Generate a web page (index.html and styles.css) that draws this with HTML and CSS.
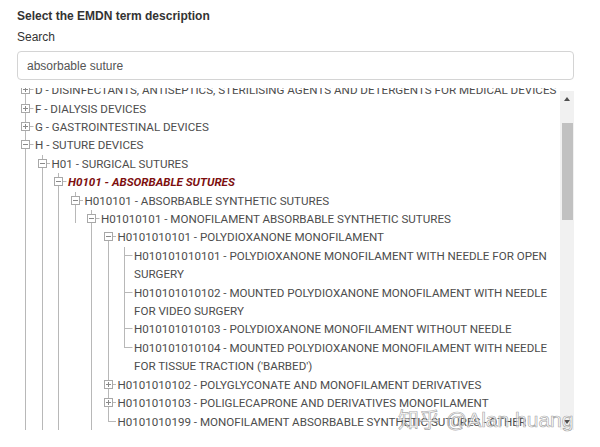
FILE: index.html
```html
<html lang="en">

<head>
    <title>EMDN term</title>
    <link rel="stylesheet" href="styles.css">
</head>

<body>
    <h4 class="title">Select the EMDN term description</h4>
    <label class="label" for="search">Search</label>
    <input id="search" class="search" type="text" value="absorbable suture">

    <div class="tree">
        <div class="tree-body">
            <div class="tree-list">
                <div class="row"><span class="g box plus up down"></span><span class="t">D - DISINFECTANTS, ANTISEPTICS, STERILISING AGENTS AND DETERGENTS FOR MEDICAL DEVICES</span></div>
                <div class="row"><span class="g box plus up down"></span><span class="t">F - DIALYSIS DEVICES</span></div>
                <div class="row"><span class="g box plus up down"></span><span class="t">G - GASTROINTESTINAL DEVICES</span></div>
                <div class="row"><span class="g box up down"></span><span class="t">H - SUTURE DEVICES</span></div>
                <div class="row"><span class="g v"></span><span class="g box up down"></span><span class="t">H01 - SURGICAL SUTURES</span></div>
                <div class="row"><span class="g v"></span><span class="g v"></span><span class="g box up down"></span><span class="t hl">H0101 - ABSORBABLE SUTURES</span></div>
                <div class="row"><span class="g v"></span><span class="g v"></span><span class="g v"></span><span class="g box up down"></span><span class="t">H010101 - ABSORBABLE SYNTHETIC SUTURES</span></div>
                <div class="row"><span class="g v"></span><span class="g v"></span><span class="g v"></span><span class="g vt"></span><span class="g box up down"></span><span class="t">H01010101 - MONOFILAMENT ABSORBABLE SYNTHETIC SUTURES</span></div>
                <div class="row"><span class="g v"></span><span class="g v"></span><span class="g v"></span><span class="g"></span><span class="g v"></span><span class="g box down"></span><span class="t">H0101010101 - POLYDIOXANONE MONOFILAMENT</span></div>
                <div class="row"><span class="g v"></span><span class="g v"></span><span class="g v"></span><span class="g"></span><span class="g v"></span><span class="g v"></span><span class="g leaf"></span><span class="t">H010101010101 - POLYDIOXANONE MONOFILAMENT WITH NEEDLE FOR OPEN SURGERY</span></div>
                <div class="row"><span class="g v"></span><span class="g v"></span><span class="g v"></span><span class="g"></span><span class="g v"></span><span class="g v"></span><span class="g leaf"></span><span class="t">H010101010102 - MOUNTED POLYDIOXANONE MONOFILAMENT WITH NEEDLE FOR VIDEO SURGERY</span></div>
                <div class="row"><span class="g v"></span><span class="g v"></span><span class="g v"></span><span class="g"></span><span class="g v"></span><span class="g v"></span><span class="g leaf"></span><span class="t">H010101010103 - POLYDIOXANONE MONOFILAMENT WITHOUT NEEDLE</span></div>
                <div class="row"><span class="g v"></span><span class="g v"></span><span class="g v"></span><span class="g"></span><span class="g v"></span><span class="g v"></span><span class="g leaf last"></span><span class="t">H010101010104 - MOUNTED POLYDIOXANONE MONOFILAMENT WITH NEEDLE FOR TISSUE TRACTION ('BARBED')</span></div>
                <div class="row"><span class="g v"></span><span class="g v"></span><span class="g v"></span><span class="g"></span><span class="g v"></span><span class="g box plus up down"></span><span class="t">H0101010102 - POLYGLYCONATE AND MONOFILAMENT DERIVATIVES</span></div>
                <div class="row"><span class="g v"></span><span class="g v"></span><span class="g v"></span><span class="g"></span><span class="g v"></span><span class="g box plus up down"></span><span class="t">H0101010103 - POLIGLECAPRONE AND DERIVATIVES MONOFILAMENT</span></div>
                <div class="row"><span class="g v"></span><span class="g v"></span><span class="g v"></span><span class="g"></span><span class="g v"></span><span class="g leaf last"></span><span class="t">H0101010199 - MONOFILAMENT ABSORBABLE SYNTHETIC SUTURES - OTHER</span></div>
                <div class="row"><span class="g v"></span><span class="g v"></span><span class="g v"></span><span class="g"></span><span class="g box plus up down"></span><span class="t">H01010102 - MULTIFILAMENT ABSORBABLE SYNTHETIC SUTURES</span></div>
            </div>
        </div>
        <div class="scrollbar">
            <div class="sb-btn"><span class="arrow-up"></span></div>
            <div class="sb-thumb"></div>
            <div class="sb-btn sb-bottom"><span class="arrow-down"></span></div>
        </div>
    </div>

    <div class="watermark">知乎 @Alan huang</div>
</body>
</html>
```

FILE: styles.css
```css
body {
    margin: 0;
    padding: 8px 26px 0 17px;
    font-family: "Liberation Sans", Arial, sans-serif;
    background: #fff;
    position: relative;
    height: 447px;
    box-sizing: border-box;
    overflow: hidden;
}

.title {
    margin: 0;
    font-size: 12px;
    line-height: 16px;
    font-weight: bold;
    color: #333;
}

.label {
    display: block;
    margin-top: 5px;
    font-size: 12px;
    line-height: 16px;
    color: #333;
}

.search {
    display: block;
    width: 100%;
    height: 29px;
    margin: 6px 0 0 0;
    padding: 0 9px;
    box-sizing: border-box;
    border: 1px solid #d4d4d4;
    border-radius: 4px;
    font-family: "Liberation Sans", Arial, sans-serif;
    font-size: 12px;
    color: #555;
    outline: none;
}

/* tree panel */
.tree {
    display: flex;
    height: 342px;
    margin-top: 8px;
    overflow: hidden;
}

.tree-body {
    flex: 1;
    overflow: hidden;
    padding-right: 2px;
    font-family: Roboto, "Noto Sans", sans-serif;
    font-size: 11.6px;
    line-height: 18.4px;
    color: #4d4d4d;
}

.tree-list {
    margin-top: -6.8px;
}

.row {
    display: flex;
    align-items: stretch;
}

.t {
    padding-left: 1.5px;
}

.t.hl {
    color: #7d0f0f;
    font-weight: bold;
    font-style: italic;
}

/* guide cells */
.g {
    flex: none;
    width: 16.5px;
    position: relative;
    --ln: #b8b8b8;
}

.g.v {
    background: linear-gradient(var(--ln), var(--ln)) 8px 0 / 1px 100% no-repeat;
}

.g.vt {
    background: linear-gradient(var(--ln), var(--ln)) 8px 0 / 1px 13px no-repeat;
}

.g.leaf {
    background:
        linear-gradient(var(--ln), var(--ln)) 8px 0 / 1px 100% no-repeat,
        linear-gradient(var(--ln), var(--ln)) 8px 8px / 8.5px 1px no-repeat;
}

.g.leaf.last {
    background:
        linear-gradient(var(--ln), var(--ln)) 8px 0 / 1px 9px no-repeat,
        linear-gradient(var(--ln), var(--ln)) 8px 8px / 8.5px 1px no-repeat;
}

.g.box {
    background: linear-gradient(var(--ln), var(--ln)) 13px 8px / 3.5px 1px no-repeat;
}

.g.box.up {
    background:
        linear-gradient(var(--ln), var(--ln)) 13px 8px / 3.5px 1px no-repeat,
        linear-gradient(var(--ln), var(--ln)) 8px 0 / 1px 4px no-repeat;
}

.g.box.down {
    background:
        linear-gradient(var(--ln), var(--ln)) 13px 8px / 3.5px 1px no-repeat,
        linear-gradient(var(--ln), var(--ln)) 8px 13px / 1px calc(100% - 13px) no-repeat;
}

.g.box.up.down {
    background:
        linear-gradient(var(--ln), var(--ln)) 13px 8px / 3.5px 1px no-repeat,
        linear-gradient(var(--ln), var(--ln)) 8px 0 / 1px 4px no-repeat,
        linear-gradient(var(--ln), var(--ln)) 8px 13px / 1px calc(100% - 13px) no-repeat;
}

.g.box::before {
    content: "";
    position: absolute;
    left: 4px;
    top: 4px;
    width: 9px;
    height: 9px;
    box-sizing: border-box;
    border: 1px solid #a8a8a8;
    background: linear-gradient(#8a8a8a, #8a8a8a) center / 5px 1px no-repeat, #fff;
}

.g.box.plus::before {
    background:
        linear-gradient(#8a8a8a, #8a8a8a) center / 5px 1px no-repeat,
        linear-gradient(#8a8a8a, #8a8a8a) center / 1px 5px no-repeat,
        #fff;
}

/* scrollbar */
.scrollbar {
    flex: none;
    width: 14px;
    margin-top: 3px;
    background: #f1f1f1;
    display: flex;
    flex-direction: column;
}

.sb-btn {
    height: 16px;
    display: flex;
    align-items: center;
    justify-content: center;
}

.sb-bottom {
    margin-top: auto;
}

.arrow-up {
    width: 0;
    height: 0;
    border-left: 3.5px solid transparent;
    border-right: 3.5px solid transparent;
    border-bottom: 4px solid #505050;
}

.arrow-down {
    width: 0;
    height: 0;
    border-left: 3.5px solid transparent;
    border-right: 3.5px solid transparent;
    border-top: 4px solid #505050;
}

.sb-thumb {
    height: 97px;
    margin: 16px 1.5px 0;
    background: #c1c1c1;
}

.watermark {
    position: absolute;
    left: 398px;
    top: 405px;
    font-family: "Liberation Sans", "Noto Sans CJK SC", sans-serif;
    font-size: 21px;
    line-height: 30px;
    color: rgba(255, 255, 255, 0.7);
    -webkit-text-stroke: 0.7px rgba(130, 130, 130, 0.7);
    white-space: nowrap;
}
```
